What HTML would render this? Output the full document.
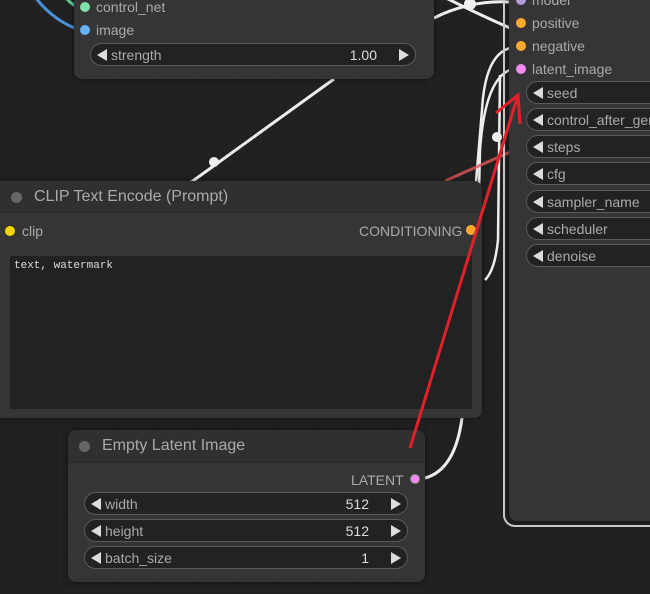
<!DOCTYPE html>
<html><head><meta charset="utf-8"><style>
*{margin:0;padding:0;box-sizing:border-box}
html,body{width:650px;height:594px;overflow:hidden}
body{position:relative;background:#202020;font-family:"Liberation Sans",sans-serif;color:#aaa;font-size:14px}
#c{position:absolute;left:0;top:0;width:650px;height:594px;overflow:hidden;
background-image:linear-gradient(#242424 1px,transparent 1px),linear-gradient(90deg,#242424 1px,transparent 1px);background-size:10px 10px}
.abs{position:absolute}
.node{position:absolute;background:#353535;border-radius:8px;box-shadow:0 0 6px rgba(0,0,0,.5)}
.title{position:absolute;left:0;right:0;top:0;background:#303030;border-radius:8px 8px 0 0;border-bottom:1px solid #2a2a2a}
.ttext{position:absolute;font-size:16px;color:#aaa}
.tdot{position:absolute;width:11px;height:11px;border-radius:50%;background:#666}
.dot{position:absolute;width:10px;height:10px;border-radius:50%}
.lbl{position:absolute;font-size:14px;color:#aaa;line-height:16px}
.w{position:absolute;height:23px;background:#222;border:1px solid #5a5a5a;border-radius:12px;font-size:14px;color:#aaa;overflow:hidden}
.w .n{position:absolute;left:20px;top:3px;white-space:nowrap}
.w .v{position:absolute;right:38px;top:3px;color:#ddd}
.w .l{position:absolute;left:6px;top:5px;width:0;height:0;border-top:6px solid transparent;border-bottom:6px solid transparent;border-right:10px solid #ddd}
.w .r{position:absolute;right:6px;top:5px;width:0;height:0;border-top:6px solid transparent;border-bottom:6px solid transparent;border-left:10px solid #ddd}
</style></head><body><div id="c">
<svg class="abs" style="left:0;top:0" width="650" height="594">
<path d="M30 -10 Q50 20 80 30" stroke="#4a90d9" stroke-width="3" fill="none"/>
<path d="M60 -10 Q70 5 80 8" stroke="#5ad19a" stroke-width="3" fill="none"/>
<path d="M334 79 L190 183" stroke="#eee" stroke-width="3" fill="none"/>
<circle cx="214" cy="162" r="5" fill="#eee"/>
<path d="M434 18 Q470 0 510 2" stroke="#eee" stroke-width="3" fill="none"/>
<path d="M440 -5 Q480 15 510 28" stroke="#eee" stroke-width="3" fill="none"/>
<circle cx="470" cy="4" r="6" fill="#eee"/>
<path d="M510 48 Q485 55 482 110 L472 230" stroke="#eee" stroke-width="2.5" fill="none"/>
<path d="M510 70 Q485 80 480 150 L478 230" stroke="#eee" stroke-width="2.5" fill="none"/>
<path d="M500 75 L498 240 Q495 270 485 280" stroke="#eee" stroke-width="2.5" fill="none"/>
<circle cx="497" cy="137" r="5" fill="#eee"/>
<path d="M445 181 L510 152" stroke="#d55" stroke-width="3" opacity=".8" fill="none"/>
<path d="M425 478 Q455 470 462 418" stroke="#eee" stroke-width="3" fill="none"/>
</svg>

<div class="node" style="left:74px;top:-20px;width:360px;height:99px;">
<div class="dot" style="left:6px;top:22px;background:#7fe0a8"></div><div class="lbl" style="left:22px;top:19px">control_net</div>
<div class="dot" style="left:6px;top:45px;background:#64b5f6"></div><div class="lbl" style="left:22px;top:42px">image</div>
<div class="w" style="left:16px;top:63px;width:326px"><div class="l"></div><div class="n">strength</div><div class="v">1.00</div><div class="r"></div></div>
</div>

<div class="abs" style="left:503px;top:-20px;width:160px;height:547px;border:2px solid #ccc;border-radius:12px"></div>
<div class="node" style="left:509px;top:-20px;width:160px;height:541px;">
<div class="dot" style="left:7px;top:15px;background:#b39ddb"></div><div class="lbl" style="left:23px;top:12px">model</div>
<div class="dot" style="left:7px;top:38px;background:#ffa931"></div><div class="lbl" style="left:23px;top:35px">positive</div>
<div class="dot" style="left:7px;top:61px;background:#ffa931"></div><div class="lbl" style="left:23px;top:58px">negative</div>
<div class="dot" style="left:7px;top:84px;background:#f08cf0"></div><div class="lbl" style="left:23px;top:81px">latent_image</div>
<div class="w" style="left:17px;top:101px;width:143px"><div class="l"></div><div class="n">seed</div></div>
<div class="w" style="left:17px;top:128px;width:143px"><div class="l"></div><div class="n">control_after_generate</div></div>
<div class="w" style="left:17px;top:155px;width:143px"><div class="l"></div><div class="n">steps</div></div>
<div class="w" style="left:17px;top:182px;width:143px"><div class="l"></div><div class="n">cfg</div></div>
<div class="w" style="left:17px;top:210px;width:143px"><div class="l"></div><div class="n">sampler_name</div></div>
<div class="w" style="left:17px;top:237px;width:143px"><div class="l"></div><div class="n">scheduler</div></div>
<div class="w" style="left:17px;top:264px;width:143px"><div class="l"></div><div class="n">denoise</div></div>
</div>

<div class="node" style="left:-8px;top:181px;width:490px;height:237px;">
<div class="title" style="height:32px"></div>
<div class="tdot" style="left:19px;top:11px"></div>
<div class="ttext" style="left:42px;top:7px">CLIP Text Encode (Prompt)</div>
<div class="dot" style="left:13px;top:45px;background:#ffd500"></div><div class="lbl" style="left:30px;top:42px">clip</div>
<div class="lbl" style="left:367px;top:42px">CONDITIONING</div>
<div class="dot" style="left:474px;top:44px;background:#ffa931"></div>
<div class="abs" style="left:18px;top:75px;width:462px;height:153px;background:#222;font-family:'Liberation Mono',monospace;font-size:11px;color:#ddd;padding:4px 4px">text, watermark</div>
</div>

<div class="node" style="left:68px;top:430px;width:357px;height:152px;">
<div class="title" style="height:33px"></div>
<div class="tdot" style="left:11px;top:11px"></div>
<div class="ttext" style="left:34px;top:7px">Empty Latent Image</div>
<div class="lbl" style="left:283px;top:42px">LATENT</div>
<div class="dot" style="left:342px;top:44px;background:#f08cf0;border:1px solid #888"></div>
<div class="w" style="left:16px;top:62px;width:324px"><div class="l"></div><div class="n">width</div><div class="v">512</div><div class="r"></div></div>
<div class="w" style="left:16px;top:89px;width:324px"><div class="l"></div><div class="n">height</div><div class="v">512</div><div class="r"></div></div>
<div class="w" style="left:16px;top:116px;width:324px"><div class="l"></div><div class="n">batch_size</div><div class="v">1</div><div class="r"></div></div>
</div>

<svg class="abs" style="left:0;top:0" width="650" height="594">
<path d="M410 448 L518 95" stroke="#e0202a" stroke-width="3" fill="none"/>
<path d="M496 113 L518 95 L520 124" stroke="#e0202a" stroke-width="3" fill="none"/>
</svg>
</div></body></html>
